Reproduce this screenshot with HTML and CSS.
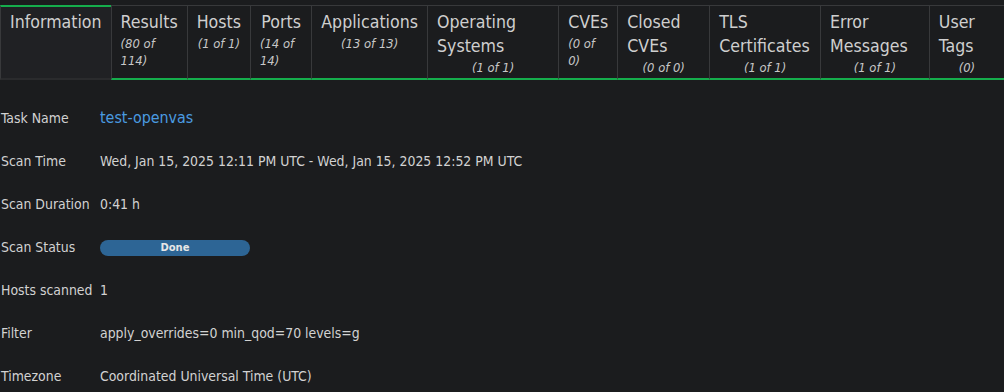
FILE: index.html
```html
<!DOCTYPE html>
<html lang="en">
<head>
<meta charset="utf-8">
<title>Report</title>
<link rel="stylesheet" href="styles.css">
</head>
<body>
<div class="tabs">
  <div class="tab active"><div class="tab-title">Information</div></div>
  <div class="tab"><div class="tab-title">Results</div><div class="tab-count">(80 of 114)</div></div>
  <div class="tab"><div class="tab-title">Hosts</div><div class="tab-count">(1 of 1)</div></div>
  <div class="tab"><div class="tab-title">Ports</div><div class="tab-count">(14 of 14)</div></div>
  <div class="tab"><div class="tab-title">Applications</div><div class="tab-count">(13 of 13)</div></div>
  <div class="tab"><div class="tab-title">Operating Systems</div><div class="tab-count">(1 of 1)</div></div>
  <div class="tab"><div class="tab-title">CVEs</div><div class="tab-count">(0 of 0)</div></div>
  <div class="tab"><div class="tab-title">Closed CVEs</div><div class="tab-count">(0 of 0)</div></div>
  <div class="tab"><div class="tab-title">TLS Certificates</div><div class="tab-count">(1 of 1)</div></div>
  <div class="tab"><div class="tab-title">Error Messages</div><div class="tab-count">(1 of 1)</div></div>
  <div class="tab"><div class="tab-title">User Tags</div><div class="tab-count">(0)</div></div>
</div>
<div class="info">
  <div class="label">Task Name</div><div class="value"><span class="link">test-openvas</span></div>
  <div class="label">Scan Time</div><div class="value">Wed, Jan 15, 2025 12:11 PM UTC - Wed, Jan 15, 2025 12:52 PM UTC</div>
  <div class="label">Scan Duration</div><div class="value">0:41 h</div>
  <div class="label">Scan Status</div><div class="value"><div class="status">Done</div></div>
  <div class="label">Hosts scanned</div><div class="value">1</div>
  <div class="label">Filter</div><div class="value">apply_overrides=0 min_qod=70 levels=g</div>
  <div class="label">Timezone</div><div class="value">Coordinated Universal Time (UTC)</div>
</div>
</body>
</html>
```
FILE: styles.css
```css
html, body {
  margin: 0;
  padding: 0;
  background: #1b1c1e;
  color: #d2d2d2;
  font-family: "DejaVu Sans Condensed", "DejaVu Sans", sans-serif;
  overflow: hidden;
}
.tabs {
  display: flex;
  margin-top: 5px;
}
.tab {
  display: flex;
  flex-direction: column;
  align-items: center;
  padding: 4px 9px 2px;
  border-left: 1px solid #38393b;
  border-top: 1px solid #38393b;
  border-bottom: 2px solid #15ad4c;
  color: #cfcfcf;
}
.tab.active {
  background: #202124;
  border-top: 2px solid #15ad4c;
  border-bottom: 2px solid #2a2b2d;
  padding-top: 3px;
}
.tab-title {
  font-size: 17.6px;
  line-height: 24px;
}
.tab-count {
  font-size: 12.9px;
  font-style: italic;
  line-height: 17px;
  margin-top: 1px;
  color: #c8c8c8;
}
.info {
  display: grid;
  grid-template-columns: 100px auto;
  grid-auto-rows: 43px;
  align-items: center;
  margin-top: 16px;
  font-size: 13.9px;
}
.label {
  padding-left: 1px;
}
.link {
  color: #4a9be0;
  font-size: 15.9px;
}
.status {
  width: 150px;
  height: 16px;
  margin-top: 2px;
  border-radius: 8px;
  background: #2d6595;
  color: #e6e6e6;
  font-family: "DejaVu Sans", sans-serif;
  font-weight: bold;
  font-size: 10px;
  line-height: 16px;
  text-align: center;
}
```
